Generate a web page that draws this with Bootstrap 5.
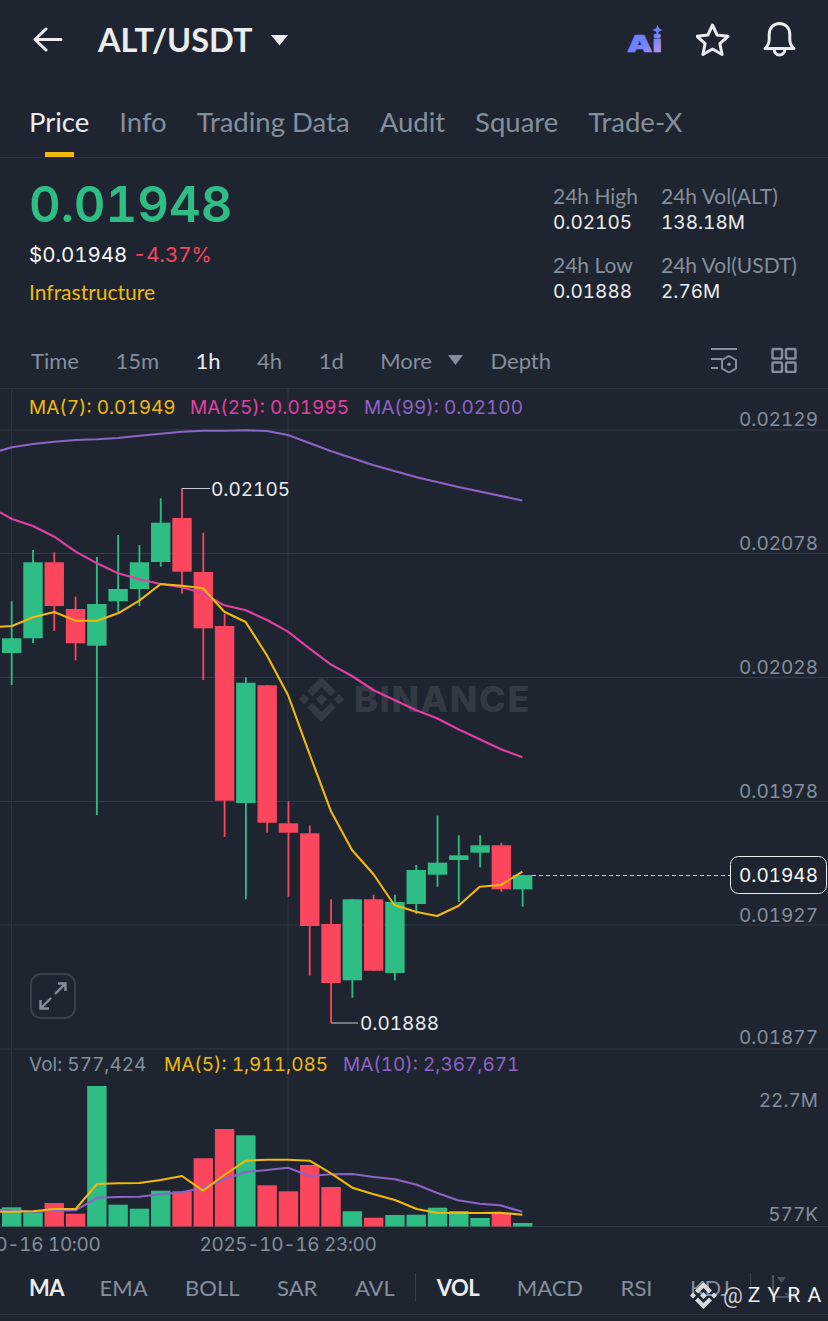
<!DOCTYPE html>
<html lang="en">
<head>
    <meta charset="UTF-8">
    <meta name="viewport" content="width=device-width, initial-scale=1.0">
    <title>ALT/USDT</title>
    <link rel="stylesheet" href="https://cdn.jsdelivr.net/npm/bootstrap@5.3.2/dist/css/bootstrap.min.css">
    <style>
        body { background: #1e2530; color: #eaecef; font-family: "Lato", "Liberation Sans", sans-serif; overflow: hidden; }
        .page-wrap { width: 828px; height: 1321px; position: relative; overflow: hidden; }
        .top-head { height: 80px; padding-left: 33px; padding-right: 31px; }
        .pair-name { font-size: 32.5px; font-weight: 700; margin-left: 35px; line-height: 1; }
        .title-caret { margin-left: 19px; }
        .ai-icon { margin-right: 33px; overflow: visible; }
        .bell-icon { margin-left: 33px; }
        .tab-row { height: 78px; padding-left: 29px; gap: 30px; border-bottom: 1px solid #2b3139; }
        .tab-item { font-size: 27.5px; color: #848e9c; line-height: 1; padding-top: 28px; display: flex; flex-direction: column; align-items: center; }
        .tab-item.on { color: #eaecef; }
        .tab-bar { width: 29px; height: 5px; background: #f0b90b; margin-top: 16px; }
        .stat-area { height: 177px; padding-left: 29px; padding-top: 22px; }
        .price-col { width: 524px; }
        .big-price { font-family: "Inter", sans-serif; font-size: 49px; font-weight: 600; color: #2ebd85; line-height: 1; font-variant-numeric: tabular-nums; }
        .sub-price { font-family: "Inter", sans-serif; font-size: 20.5px; margin-top: 15px; line-height: 1.1; color: #f5f6f7; font-variant-numeric: tabular-nums; }
        .sub-price span { color: #f6465d; }
        .sector-tag { font-size: 21px; color: #f0b90b; margin-top: 14px; line-height: 1; }
        .stat-cols { display: grid; grid-template-columns: 108px auto; align-content: start; margin-top: 5px; }
        .stat-cell { height: 69px; }
        .stat-cell div:first-child { font-size: 21px; color: #848e9c; line-height: 22px; }
        .stat-cell div:last-child { font-family: "Inter", sans-serif; font-size: 19px; color: #eaecef; line-height: 22px; margin-top: 5px; font-variant-numeric: tabular-nums; }
        .range-row { height: 54px; padding-left: 31px; padding-right: 31px; padding-bottom: 3px; border-bottom: 1px solid #2b3139; font-size: 22px; color: #848e9c; }
        .range-row .on { color: #eaecef; }
        .range-list { gap: 36.5px; }
        .depth-item { margin-left: -9px; }
        .icon-pair { gap: 33px; }
        .chart-svg { display: block; width: 828px; height: 876px; }
        .chart-svg text { font-family: "Inter", sans-serif; font-size: 19px; dominant-baseline: central; font-variant-numeric: tabular-nums; }
        .chart-svg .date-text { letter-spacing: -0.35px; }
        .chart-svg .mark-text { font-size: 36px; font-weight: 800; fill: #333a45; letter-spacing: 1.6px; }
        .ind-row { height: 50px; padding-left: 29px; padding-bottom: 5px; border-bottom: 1px solid #2b3139; font-size: 22px; color: #848e9c; gap: 37.5px; }
        .ind-row .on { color: #eaecef; font-weight: 700; letter-spacing: -0.5px; }
        .ind-row .on:first-child { margin-right: -2px; }
        .ind-sep { width: 1px; height: 28px; background: #3a404a; margin: 0 -17px; }
        .id-mark { position: absolute; left: 690px; top: 1282px; display: flex; align-items: center; color: #f5f6f7; font-size: 21px; font-family: "Roboto", sans-serif; letter-spacing: 7.2px; line-height: 1; }
        .id-mark span { font-size: 22px; color: #c9ccd1; letter-spacing: 0; margin: 0 5px 0 6px; }
    </style>
</head>
<body>
    <div class="page-wrap">
        <div class="top-head d-flex align-items-center">
            <svg width="30" height="26" viewBox="33 28 30 26" fill="none" stroke="#eaecef" stroke-width="3" stroke-linecap="round" stroke-linejoin="round">
                <path d="M61 40.5H35.5M46 30 35 40.5 46 51"/>
            </svg>
            <span class="pair-name">ALT/USDT</span>
            <svg class="title-caret" width="17" height="12" viewBox="0 0 17 12"><path d="M0 1h17l-8.500 10.500z" fill="#eaecef"/></svg>
            <div class="ms-auto d-flex align-items-center">
                <svg class="ai-icon" width="36" height="30" viewBox="628 30 36 30">
                    <defs>
                        <linearGradient id="aiFill" x1="0" x2="1" y1="0" y2="1"><stop offset="0.5" stop-color="#6f80ff"/><stop offset="1" stop-color="#cc9ff0"/></linearGradient>
                    </defs>
                    <text x="628" y="57" font-family="Inter" font-weight="900" font-size="23" textLength="35" lengthAdjust="spacingAndGlyphs" fill="url(#aiFill)" stroke="url(#aiFill)" stroke-width="0.6">Ai</text>
                    <path d="M658.500 30l1.600 3.400 3.400 1.600-3.400 1.600-1.600 3.400-1.600-3.400-3.400-1.600 3.400-1.600z" fill="#6f80ff"/>
                </svg>
                <svg width="34" height="34" viewBox="696 25 34 34" fill="none" stroke="#eaecef" stroke-width="3" stroke-linejoin="round">
                    <path d="M712.500 27l4.600 10 10.900 1.300-8.100 7.400 2.200 10.800-9.600-5.500-9.600 5.500 2.200-10.800-8.100-7.400 10.900-1.300z"/>
                </svg>
                <svg class="bell-icon" width="34" height="36" viewBox="763 23 34 36" fill="none" stroke="#eaecef" stroke-width="3" stroke-linecap="round" stroke-linejoin="round">
                    <path d="M765 49.500c2.800-2.500 4.200-5 4.200-9v-5c0-6.500 4.300-11 10.300-11s10.300 4.500 10.300 11v5c0 4 1.400 6.500 4.200 9z"/>
                    <path d="M774 50a5.500 6 0 0 0 11 0"/>
                </svg>
            </div>
        </div>

        <div class="tab-row d-flex">
            <div class="tab-item on">Price<span class="tab-bar"></span></div>
            <div class="tab-item">Info</div>
            <div class="tab-item">Trading Data</div>
            <div class="tab-item">Audit</div>
            <div class="tab-item">Square</div>
            <div class="tab-item">Trade-X</div>
        </div>

        <div class="stat-area d-flex">
            <div class="price-col">
                <div class="big-price">0.01948</div>
                <div class="sub-price">$0.01948 <span>-4.37%</span></div>
                <div class="sector-tag">Infrastructure</div>
            </div>
            <div class="stat-cols">
                <div class="stat-cell"><div>24h High</div><div>0.02105</div></div>
                <div class="stat-cell"><div>24h Vol(ALT)</div><div>138.18M</div></div>
                <div class="stat-cell"><div>24h Low</div><div>0.01888</div></div>
                <div class="stat-cell"><div>24h Vol(USDT)</div><div>2.76M</div></div>
            </div>
        </div>

        <div class="range-row d-flex align-items-center">
            <div class="range-list d-flex align-items-center">
                <span>Time</span><span>15m</span><span class="on">1h</span><span>4h</span><span>1d</span>
                <span class="d-flex align-items-center gap-3">More
                    <svg width="15" height="10" viewBox="0 0 15 10"><path d="M0 0h15l-7.500 10z" fill="#848e9c"/></svg>
                </span>
                <span class="depth-item">Depth</span>
            </div>
            <div class="ms-auto d-flex align-items-center icon-pair">
                <svg width="28" height="26" viewBox="710 347 28 26" fill="none" stroke="#848e9c" stroke-width="2">
                    <path d="M711 349h26M711 359h11M711 368h7"/>
                    <path d="M729 356l7 4v8.500l-7 4-7-4V360z"/>
                    <circle cx="729" cy="364.300" r="1.800" fill="#848e9c" stroke="none"/>
                </svg>
                <svg width="26" height="26" viewBox="771 347 26 26" fill="none" stroke="#848e9c" stroke-width="2.400">
                    <rect x="772.500" y="349" width="9.500" height="9.500" rx="1"/><rect x="786" y="349" width="9.500" height="9.500" rx="1"/>
                    <rect x="772.500" y="362.500" width="9.500" height="9.500" rx="1"/><rect x="786" y="362.500" width="9.500" height="9.500" rx="1"/>
                </svg>
            </div>
        </div>

        <!-- chart canvas, viewBox keeps page y coordinates -->
        <svg class="chart-svg" id="chartSvg" viewBox="0 389 828 876"></svg>

        <div class="ind-row d-flex align-items-center">
            <span class="on">MA</span><span>EMA</span><span>BOLL</span><span>SAR</span><span>AVL</span>
            <span class="ind-sep"></span>
            <span class="on">VOL</span><span>MACD</span><span>RSI</span><span>KDJ</span>
            <span class="ind-sep"></span>
            <svg width="26" height="24" viewBox="784 1272 26 24" fill="none" stroke="#4c535e" stroke-width="2">
                <path d="M785 1272v22h24"/>
                <path d="M797 1290l6 4 5-7"/>
                <path d="M789 1274h9l-4.500 6z" fill="#4c535e" stroke="none"/>
            </svg>
        </div>

        <div class="id-mark">
            <svg width="27" height="27" viewBox="0 0 27 27" fill="#d5d8dc">
                <path d="M13.500 0 22 8.500 19 11.500 13.500 6 8 11.500 5 8.500zM3 10.500 6 13.500 3 16.500 0 13.500zM24 10.500 27 13.500 24 16.500 21 13.500zM13.500 10 17 13.500 13.500 17 10 13.500zM13.500 27 22 18.500 19 15.500 13.500 21 8 15.500 5 18.500z"/>
            </svg>
            <span>@</span>ZYRA
        </div>
    </div>

    <script>
        const GREEN = '#2ebd85', RED = '#fb465e', YEL = '#f0b90b', PINK = '#e040a0', PUR = '#8e63c6', GRAY = '#848e9c';
        const START = 11.7, STEP = 21.29;
        // up/down, wick top, wick bottom, body top, body bottom, volume top
        const candles = [
            [1, 601.3, 685, 638.3, 653, 1207.3], [1, 550, 643, 562.3, 638.3, 1212.3], [0, 552.3, 631, 562.3, 606, 1203],
            [0, 596.7, 660.3, 609, 643.3, 1213.7], [1, 557, 815, 604, 645.7, 1086], [1, 535, 612.7, 589, 601.3, 1204.7],
            [1, 545, 606, 562.3, 589, 1208.7], [1, 498.3, 566.7, 522.7, 562, 1190.7], [0, 488.3, 593.7, 518, 571.7, 1191.3],
            [0, 532.7, 680, 572, 628.3, 1158.3], [0, 614, 837, 626, 800.7, 1129], [1, 677.3, 899.3, 682.7, 803, 1135.3],
            [0, 685.3, 832.7, 685.3, 822.7, 1185.3], [0, 801.3, 896.7, 823.3, 832.7, 1191.3], [0, 825.7, 975.7, 833.3, 926, 1165],
            [0, 899.3, 1022.7, 924, 983, 1187], [1, 899.3, 997.7, 899.3, 980.3, 1211.3], [0, 894.7, 970.7, 899.3, 970.7, 1217.7],
            [1, 894.7, 980.3, 902, 973, 1215], [1, 865, 914, 870, 904, 1214.7], [1, 815.7, 886.7, 862.7, 874.7, 1207.7],
            [1, 835.3, 902, 855.3, 860, 1211], [1, 835.3, 867.3, 845.3, 852.7, 1218], [0, 842.7, 892, 845.3, 889.3, 1213.7],
            [1, 875, 906.7, 875, 889.3, 1223]
        ];
        const ma7 = '0,626.7 12,626 33,617.3 54.3,612 75.7,620.7 97,620.7 118,613.3 139.3,600.7 160.7,584 182,585.7 203,588.3 224.3,611.7 245.7,622 266.7,655 288,695 309.3,753.3 330.7,810.7 352,850 373.3,874 394.3,905 415.7,911.7 437,916 458.3,906 479.7,886.7 501,885 522.3,871.7';
        const ma25 = '0,512.3 12,519 33,526 54.3,536.7 75.7,551.7 97,563.3 118,573.3 139.3,579.3 160.7,584 182,587.3 203,593.3 224.3,605.3 245.7,610.3 267,620 288,631.7 309.3,648.3 330.7,664.3 352,676 373.3,690 394.3,700 415.7,710 437,718.3 458.3,729.3 479.7,739.3 501,749.3 522.3,757.3';
        const ma99 = '0,450.7 12,447.3 33,444 54.3,441.7 75.7,440 97,439.3 118,438 139.3,435.7 160.7,433.7 182,431.7 203,430.7 224.3,430.7 245.7,430.3 267,431 288,435 330.7,451 373,465 415.7,477 458.3,487 522.3,500.5';
        const volMa5 = '0,1211.7 11.7,1211.7 33,1211.3 54.3,1209 75.7,1209 97,1184 118,1183.3 139.3,1183 160.7,1180 182,1176 203,1190.7 224.3,1175 245.7,1160.7 267,1159.7 288,1159.7 309.7,1160.7 331,1173.3 352.3,1187.7 373.7,1194.3 395,1200 416.7,1209 436.7,1212.7 458,1213 480,1213 500,1212.7 522.3,1214.7';
        const volMa10 = '0,1210 11.7,1210 33,1211.7 54.3,1210.7 75.7,1210.3 97,1197.7 118,1197 139.3,1196.7 160.7,1194.3 182,1192.3 203,1187.7 224.3,1179.3 245.7,1172 267,1170 288,1167.7 309.7,1176 331,1174.3 352.3,1174 373.7,1177 395,1179.3 416.7,1184.7 436.7,1192.7 458,1200.3 480,1203.7 500,1205.3 522.3,1211.7';

        let out = '';
        // grid
        [430, 553.5, 677.5, 801.5, 925, 1049].forEach(y => { out += `<path d="M0 ${y}H828" stroke="#343a45" stroke-width="1"/>`; });
        out += `<path d="M0 1226.5H828" stroke="#343a45" stroke-width="1"/>`;
        [11.7, 288].forEach(x => { out += `<path d="M${x} 389V1227" stroke="#2f3540" stroke-width="1"/>`; });

        // watermark
        out += `<g transform="translate(299 677) scale(1.667)" fill="#333a45"><path d="M13.5 0 22 8.5 19 11.5 13.5 6 8 11.5 5 8.5zM3 10.5 6 13.5 3 16.500 0 13.5zM24 10.5 27 13.5 24 16.5 21 13.5zM13.5 10 17 13.5 13.5 17 10 13.5zM13.5 27 22 18.5 19 15.5 13.5 21 8 15.5 5 18.5z"/></g>`;
        out += `<text class="mark-text" x="354" y="699">BINANCE</text>`;

        // candles and volume bars
        candles.forEach((c, i) => {
            const x = START + STEP * i, col = c[0] ? GREEN : RED;
            out += `<rect x="${x - 0.9}" y="${c[1]}" width="1.8" height="${c[2] - c[1]}" fill="${col}"/>`;
            out += `<rect x="${x - 9.7}" y="${c[3]}" width="19.4" height="${c[4] - c[3]}" fill="${col}"/>`;
            out += `<rect x="${x - 9.7}" y="${c[5]}" width="19.4" height="${1226.5 - c[5]}" fill="${col}"/>`;
        });

        // moving averages
        [[ma99, PUR], [ma25, PINK], [ma7, YEL], [volMa10, PUR], [volMa5, YEL]].forEach(l => {
            out += `<polyline points="${l[0]}" fill="none" stroke="${l[1]}" stroke-width="2.1" stroke-linejoin="round"/>`;
        });

        // high / low labels
        out += `<path d="M182 488.5H210M331 1023H358" stroke="#c8ccd2" stroke-width="1.2" fill="none"/>`;
        out += `<text x="211" y="489" fill="#eaecef">0.02105</text><text x="360" y="1023" fill="#eaecef">0.01888</text>`;

        // legends
        out += `<text x="29" y="407" fill="${YEL}">MA(7): 0.01949</text><text x="190" y="407" fill="${PINK}">MA(25): 0.01995</text><text x="364" y="407" fill="${PUR}">MA(99): 0.02100</text>`;
        out += `<text x="29" y="1064" fill="${GRAY}">Vol: 577,424</text><text x="164" y="1064" fill="${YEL}">MA(5): 1,911,085</text><text x="343" y="1064" fill="${PUR}">MA(10): 2,367,671</text>`;

        // right axis
        [['0.02129', 419], ['0.02078', 543], ['0.02028', 667], ['0.01978', 791], ['0.01927', 915], ['0.01877', 1037], ['22.7M', 1100], ['577K', 1214]].forEach(a => {
            out += `<text x="818" y="${a[1]}" text-anchor="end" fill="${GRAY}">${a[0]}</text>`;
        });

        // current price
        out += `<path d="M532 875.5H730" stroke="#c8ccd2" stroke-width="1" stroke-dasharray="4 3"/>`;
        out += `<rect x="730.5" y="856.5" width="96" height="37" rx="8" fill="#1e2530" stroke="#eaecef" stroke-width="1"/>`;
        out += `<text x="778.5" y="875.5" text-anchor="middle" fill="#f5f6f7">0.01948</text>`;

        // dates
        out += `<text class="date-text" x="12" y="1244" text-anchor="middle" fill="${GRAY}">2025-10-16 10:00</text><text class="date-text" x="288" y="1244" text-anchor="middle" fill="${GRAY}">2025-10-16 23:00</text>`;

        // expand button
        out += `<rect x="31" y="974" width="44" height="44" rx="10" fill="none" stroke="#3a404a" stroke-width="2"/>`;
        out += `<path d="M41 1008l10-10M55 994l10-10M58 983.5h7.5v7.5M40.5 1000v8.5h8.5" fill="none" stroke="#848e9c" stroke-width="2.4"/>`;

        document.getElementById('chartSvg').innerHTML = out;
    </script>
    <script src="https://cdn.jsdelivr.net/npm/bootstrap@5.3.2/dist/js/bootstrap.bundle.min.js"></script>
</body>
</html>
